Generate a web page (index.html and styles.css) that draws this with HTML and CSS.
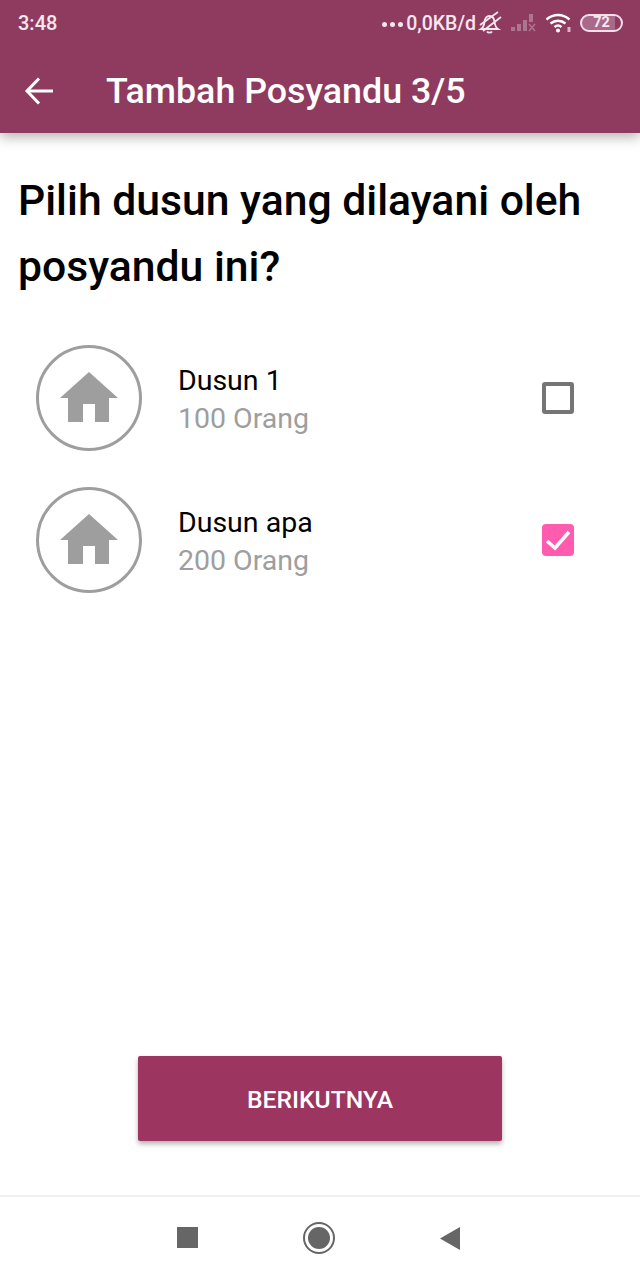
FILE: index.html
```html
<!DOCTYPE html>
<html lang="en">
<head>
    <meta charset="UTF-8">
    <title>Tambah Posyandu</title>
    <link rel="stylesheet" href="styles.css">
</head>
<body>
    <div id="container">
        <div id="header">
            <div id="status">
                <span id="time">3:48</span>
                <div id="status-right">
                    <span id="dots"><i></i><i></i><i></i></span>
                    <span id="speed">0,0KB/d</span>
                    <svg id="bell" width="24" height="24" viewBox="0 0 24 24" fill="none" stroke="#f6e6ee" stroke-width="1.800">
                        <path d="M3 18c2.500-1.500 3-3.500 3.500-7 .5-3.500 2.500-6 5-6s4.500 2.500 5 5.500c.4 3.500 1 6 3.500 7.500z"/>
                        <path d="M9 20.500c1 1.500 4 1.500 5 0"/>
                        <path d="M2 14L20 1"/>
                        <path d="M5 20L23 6"/>
                    </svg>
                    <svg id="signal" width="26" height="20" viewBox="0 0 26 20" fill="#ac7590">
                        <rect x="1" y="14" width="4" height="4"/>
                        <rect x="7" y="11" width="4" height="7"/>
                        <rect x="13" y="7" width="4" height="11"/>
                        <rect x="19" y="1" width="4" height="8"/>
                        <path d="M19 11l6 7M25 11l-6 7" stroke="#ac7590" stroke-width="1.500"/>
                    </svg>
                    <svg id="wifi" width="26" height="20" viewBox="0 0 26 20" fill="none" stroke="#fff" stroke-width="2.400">
                        <path d="M0.500 6.500c7-6 16-6 23 0"/>
                        <path d="M4.500 10.500c4.500-3.700 10.500-3.700 15 0"/>
                        <path d="M8.500 14c2.500-2 4.500-2 7 0"/>
                        <circle cx="12" cy="17.500" r="2" fill="#fff" stroke="none"/>
                        <path d="M23 14v5" stroke="#d9b6c7" stroke-width="3"/>
                    </svg>
                    <div id="battery"><span>72</span></div>
                </div>
            </div>
            <div id="toolbar">
                <svg id="back" width="30" height="30" viewBox="0 0 30 30" fill="none" stroke="#fff" stroke-width="3">
                    <path d="M29 15H3"/>
                    <path d="M15 2.500L3 15l12 12.500"/>
                </svg>
                <h1>Tambah Posyandu 3/5</h1>
            </div>
        </div>

        <h2 id="question">Pilih dusun yang dilayani oleh posyandu ini?</h2>

        <ul id="list">
            <li>
                <div class="avatar">
                    <svg width="58" height="50" viewBox="0 0 58 50" fill="#9e9e9e">
                        <path d="M29 0L58 26H49V50H35V32H23V50H8V26H0Z"/>
                    </svg>
                </div>
                <div class="info">
                    <div class="name">Dusun 1</div>
                    <div class="count">100 Orang</div>
                </div>
                <div class="check"></div>
            </li>
            <li>
                <div class="avatar">
                    <svg width="58" height="50" viewBox="0 0 58 50" fill="#9e9e9e">
                        <path d="M29 0L58 26H49V50H35V32H23V50H8V26H0Z"/>
                    </svg>
                </div>
                <div class="info">
                    <div class="name">Dusun apa</div>
                    <div class="count">200 Orang</div>
                </div>
                <div class="check checked">
                    <svg width="32" height="32" viewBox="0 0 32 32" fill="none" stroke="#fff" stroke-width="3.500">
                        <path d="M5 17l8 7L27 8"/>
                    </svg>
                </div>
            </li>
        </ul>

        <div id="footer">
            <button id="next">BERIKUTNYA</button>
        </div>

        <div id="nav">
            <span id="nav-square"></span>
            <span id="nav-home"><span></span></span>
            <svg width="24" height="24" viewBox="0 0 24 24" fill="#666">
                <path d="M21 1V24L1 12.500Z"/>
            </svg>
        </div>
    </div>
</body>
</html>
```

FILE: styles.css
```css
*{
    margin: 0;
    padding: 0;
    box-sizing: border-box;
}
ul{
    list-style: none;
}
body{
    background: #fff;
    font-family: Roboto, "Liberation Sans", sans-serif;
}
#container{
    width: 640px;
    height: 1280px;
    display: flex;
    flex-direction: column;
    overflow: hidden;
}
#header{
    height: 133px;
    background: #8f3b60;
    box-shadow: 0 4px 12px rgba(0,0,0,.3);
    flex-shrink: 0;
}
#status{
    height: 46px;
    padding: 0 18px;
    display: flex;
    align-items: center;
    justify-content: space-between;
    color: #f6e6ee;
    font-weight: 500;
}
#time{
    font-size: 20px;
}
#status-right{
    display: flex;
    align-items: center;
}
#speed{
    font-size: 19.5px;
}
#dots{
    margin-right: 3px;
    padding-top: 3px;
    display: flex;
    gap: 3px;
}
#dots i{
    width: 5px;
    height: 5px;
    border-radius: 50%;
    background: #f6e6ee;
}
#bell{
    margin-left: 2px;
}
#signal{
    margin-left: 8px;
}
#wifi{
    margin-left: 10px;
}
#battery{
    width: 43px;
    height: 18px;
    margin-left: 8px;
    margin-right: -1px;
    border: 2px solid #f3dfe8;
    border-radius: 9px;
    font-size: 14.5px;
    font-weight: 700;
    line-height: 14px;
    text-align: center;
    background: linear-gradient(90deg, #a86a88 85%, transparent 85%);
}
#toolbar{
    height: 87px;
    padding: 3px 0 0 24px;
    display: flex;
    align-items: center;
}
#toolbar h1{
    margin-left: 52px;
    font-size: 35.8px;
    font-weight: 500;
    color: #fff;
    white-space: nowrap;
}
#question{
    margin-top: 34px;
    padding: 0 18px;
    font-size: 42.7px;
    font-weight: 500;
    line-height: 66px;
    color: #000;
}
#list{
    margin-top: 46px;
    padding: 0 36px;
}
#list li{
    height: 106px;
    margin-bottom: 36px;
    display: flex;
    align-items: center;
}
.avatar{
    width: 106px;
    height: 106px;
    padding-bottom: 2px;
    border: 3px solid #9e9e9e;
    border-radius: 50%;
    display: flex;
    align-items: center;
    justify-content: center;
    flex-shrink: 0;
}
.info{
    margin-left: 36px;
    padding-top: 4px;
    flex: 1;
}
.name{
    font-size: 28.5px;
    line-height: 38px;
    color: #000;
}
.count{
    font-size: 28.5px;
    line-height: 38px;
    color: #9e9e9e;
}
.check{
    width: 32px;
    height: 32px;
    margin-right: 30px;
    border: 4px solid #757575;
    border-radius: 3px;
}
.check.checked{
    border: 0;
    background: #ff5cb0;
    border-radius: 4px;
}
#footer{
    margin-top: auto;
    padding-bottom: 54px;
    display: flex;
    justify-content: center;
}
#next{
    width: 364px;
    height: 85px;
    padding-top: 1px;
    border: 0;
    border-radius: 2px;
    background: #9c3560;
    box-shadow: 0 3px 5px rgba(0,0,0,.3);
    color: #fff;
    font-family: inherit;
    font-size: 24.7px;
    font-weight: 500;
}
#nav{
    height: 85px;
    padding: 0 177px 2px 177px;
    border-top: 2px solid #f0f0f0;
    display: flex;
    align-items: center;
    justify-content: space-between;
}
#nav-square{
    width: 21px;
    height: 21px;
    background: #666;
}
#nav-home{
    width: 32px;
    height: 32px;
    border: 2px solid #666;
    border-radius: 50%;
    display: flex;
    align-items: center;
    justify-content: center;
}
#nav-home span{
    width: 22px;
    height: 22px;
    border-radius: 50%;
    background: #666;
}
```
